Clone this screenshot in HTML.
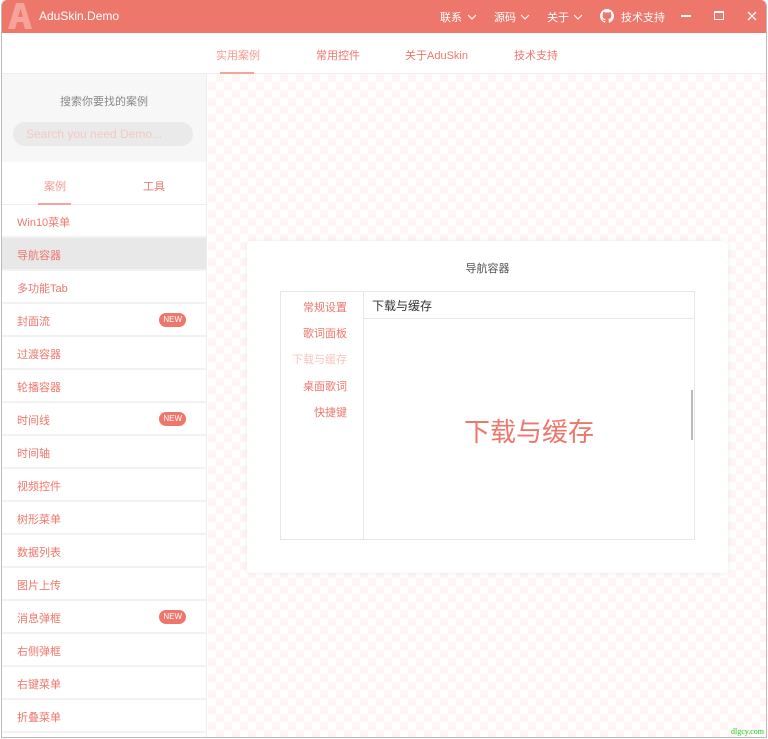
<!DOCTYPE html>
<html><head><meta charset="utf-8">
<style>
*{margin:0;padding:0;box-sizing:border-box}
body{width:768px;height:739px;overflow:hidden;background:#fff;font-family:"Liberation Sans","Noto Sans CJK SC",sans-serif;font-size:11px;position:relative}
.win{position:absolute;left:1px;top:0;width:766px;height:738px;border:1px solid #bbb;border-top:none;border-radius:6px 6px 0 0;overflow:hidden;background:#fff}
.title{position:absolute;left:0;top:0;width:100%;height:33px;background:#ee776c;color:#fff}
.title .app{position:absolute;left:37px;top:9px;font-size:12px}
.title .m{position:absolute;top:9px;font-size:11px}
.chev{position:absolute;top:14px}
.nav{position:absolute;left:0;top:33px;width:100%;height:41px;background:#fff;border-bottom:1px solid #eee}
.nav span{position:absolute;top:14px;color:#ee776c;font-size:11px}
.side{position:absolute;left:0;top:74px;width:205px;height:664px;background:#fff;border-right:1px solid #eee}
.search{height:88px;background:#f7f7f7;position:relative}
.search .t{position:absolute;top:19px;width:100%;text-align:center;color:#888;font-size:11px}
.search .in{position:absolute;left:11px;top:48px;width:180px;height:24px;border-radius:12px;background:#eaeaea;color:#f3c9c4;font-size:12px;padding:5px 13px}
.tabs{height:43px;position:relative;border-bottom:1px solid #eee}
.tabs span{position:absolute;top:16px;color:#ee776c;font-size:11px}
.item{height:33px;border-bottom:2px solid #f2f2f2;color:#ee776c;font-size:11px;padding:9px 15px;position:relative}
.item.sel{background:#e8e8e8}
.new{position:absolute;right:20px;top:9px;background:#ee776c;color:#fff;font-size:8px;border-radius:7px;padding:1px 4px;line-height:12px}
.main{position:absolute;left:206px;top:74px;width:560px;height:664px;background-color:#fff;background-image:linear-gradient(45deg,#fef5f4 25%,transparent 25%,transparent 75%,#fef5f4 75%),linear-gradient(45deg,#fef5f4 25%,transparent 25%,transparent 75%,#fef5f4 75%);background-size:16px 16px;background-position:0 0,8px 8px}
.card{position:absolute;left:39px;top:167px;width:481px;height:332px;background:#fff;border-radius:4px;box-shadow:0 0 6px rgba(0,0,0,.08)}
.card .h{position:absolute;top:19px;width:100%;text-align:center;color:#555;font-size:11px}
.box{position:absolute;left:33px;top:50px;width:415px;height:249px;border:1px solid #e6e6e6}
.lc{position:absolute;left:0;top:0;width:83px;height:100%;border-right:1px solid #e6e6e6}
.lc div{position:absolute;right:16px;color:#ee776c;font-size:11px}
.hd{position:absolute;left:83px;top:0;right:0;height:27px;border-bottom:1px solid #e6e6e6;padding:5px 8px;font-size:12px;color:#333}
.big{position:absolute;left:83px;right:0;top:120px;text-align:center;color:#ee776c;font-size:26px}
.sb{position:absolute;right:1px;top:98px;width:2px;height:50px;background:#bbb}
</style></head><body>
<div class="win">
<div class="title">
<svg style="position:absolute;left:5px;top:2px" width="26" height="28" viewBox="0 0 26 28"><path d="M9 1h8l8 26h-7l-2-7H10l-2 7H1zM11 15h5l-2.5-8z" fill="#f6a39a" fill-rule="evenodd"/></svg>
<div class="app">AduSkin.Demo</div>
<div class="m" style="left:438px">联系</div>
<svg class="chev" style="left:465px" width="10" height="6" viewBox="0 0 10 6"><path d="M1 1l4 4 4-4" stroke="#fff" fill="none" stroke-width="1.1"/></svg>
<div class="m" style="left:492px">源码</div>
<svg class="chev" style="left:518px" width="10" height="6" viewBox="0 0 10 6"><path d="M1 1l4 4 4-4" stroke="#fff" fill="none" stroke-width="1.1"/></svg>
<div class="m" style="left:545px">关于</div>
<svg class="chev" style="left:571px" width="10" height="6" viewBox="0 0 10 6"><path d="M1 1l4 4 4-4" stroke="#fff" fill="none" stroke-width="1.1"/></svg>
<svg style="position:absolute;left:598px;top:9px" width="14" height="14" viewBox="0 0 16 16"><path fill="#fff" d="M8 0C3.6 0 0 3.6 0 8c0 3.5 2.3 6.5 5.5 7.6.4.1.5-.2.5-.4v-1.4c-2.2.5-2.7-1-2.7-1-.4-.9-.9-1.2-.9-1.2-.7-.5.1-.5.1-.5.8.1 1.2.8 1.2.8.7 1.2 1.900.9 2.300.7.1-.5.3-.9.5-1.100-1.800-.2-3.600-.9-3.600-4 0-.9.3-1.600.8-2.100-.1-.2-.4-1 .1-2.100 0 0 .7-.2 2.200.8.6-.2 1.300-.3 2-.3s1.400.1 2 .3c1.500-1 2.200-.8 2.200-.8.4 1.100.2 1.900.1 2.100.5.6.8 1.300.8 2.100 0 3.100-1.900 3.700-3.600 3.900.3.3.5.8.5 1.500v2.200c0 .2.1.5.6.4C13.700 14.500 16 11.500 16 8c0-4.400-3.600-8-8-8z"/></svg>
<div class="m" style="left:619px">技术支持</div>
<div style="position:absolute;left:679px;top:15px;width:10px;height:2px;background:#fff"></div>
<div style="position:absolute;left:712px;top:11px;width:10px;height:9px;border:1.5px solid #fff;border-top-width:2.5px"></div>
<svg style="position:absolute;left:745px;top:11px" width="10" height="10" viewBox="0 0 10 10"><path d="M1 1l8 8M9 1l-8 8" stroke="#fff" stroke-width="1.3"/></svg>
</div>
<div class="nav">
<span style="left:214px;color:#f39a91">实用案例</span>
<div style="position:absolute;left:218px;top:39px;width:34px;height:2px;background:#f3a59d"></div>
<span style="left:314px">常用控件</span>
<span style="left:403px">关于AduSkin</span>
<span style="left:512px">技术支持</span>
</div>
<div class="side">
<div class="search"><div class="t">搜索你要找的案例</div><div class="in">Search you need Demo...</div></div>
<div class="tabs"><span style="left:42px;color:#f39a91">案例</span><div style="position:absolute;left:36px;top:41px;width:33px;height:2px;background:#f3a59d"></div><span style="left:141px">工具</span></div>
<div class="item">Win10菜单</div>
<div class="item sel">导航容器</div>
<div class="item">多功能Tab</div>
<div class="item">封面流<span class="new">NEW</span></div>
<div class="item">过渡容器</div>
<div class="item">轮播容器</div>
<div class="item">时间线<span class="new">NEW</span></div>
<div class="item">时间轴</div>
<div class="item">视频控件</div>
<div class="item">树形菜单</div>
<div class="item">数据列表</div>
<div class="item">图片上传</div>
<div class="item">消息弹框<span class="new">NEW</span></div>
<div class="item">右侧弹框</div>
<div class="item">右键菜单</div>
<div class="item">折叠菜单</div>
</div>
<div class="main">
<div class="card">
<div class="h">导航容器</div>
<div class="box">
<div class="lc">
<div style="top:7px">常规设置</div>
<div style="top:33px">歌词面板</div>
<div style="top:59px;color:#f8c5bf">下载与缓存</div>
<div style="top:86px">桌面歌词</div>
<div style="top:112px">快捷键</div>
</div>
<div class="hd">下载与缓存</div>
<div class="big">下载与缓存</div>
<div class="sb"></div>
</div>
</div>
<div style="position:absolute;right:4px;bottom:2px;color:#2c2;font-size:8px;font-family:'Liberation Serif',serif">dlgcy.com</div>
</div>
</div>
</body></html>
